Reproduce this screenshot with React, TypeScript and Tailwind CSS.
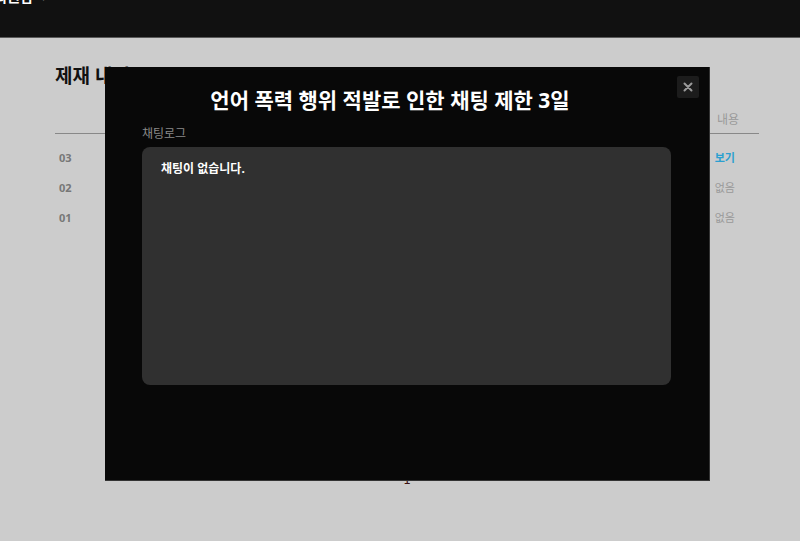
const font = { fontFamily: '"Noto Sans", "Noto Sans CJK KR", sans-serif' }

const rows = [
  { no: '03', content: '보기', link: true },
  { no: '02', content: '없음', link: false },
  { no: '01', content: '없음', link: false },
]

export default function App() {
  return (
    <div className="relative h-[541px] w-[800px] overflow-hidden bg-[#cccccc]" style={font}>
      {/* Top bar */}
      <div className="flex h-[38px] items-start border-b border-[#5a5a5a] bg-[#111111]">
        <div className="-ml-[6px] -mt-[10px] flex items-center gap-2 text-[14px] font-bold leading-[14px] text-white">
          <span>회원님</span>
          <span className="text-[10px] text-[#666]">▾</span>
        </div>
      </div>

      {/* Page content */}
      <div className="ml-[55px] mr-[41px] pt-[24px]">
        <h1 className="text-[19px] font-bold leading-[28px] text-[#111]">제재 내역</h1>
        <div className="mt-[16px] flex h-[28px] items-center justify-end border-b border-[#888] pr-[20px]">
          <span className="text-[12px] text-[#999]">내용</span>
        </div>
        <div className="pt-[9px]">
          {rows.map((r) => (
            <div key={r.no} className="flex h-[30px] items-center justify-between pl-[4px] pr-[24px]">
              <span className="text-[11px] font-bold text-[#777]">{r.no}</span>
              <span className={r.link ? 'text-[11px] font-bold text-[#2a9fd0]' : 'text-[11px] text-[#999]'}>
                {r.content}
              </span>
            </div>
          ))}
        </div>
        <div
          className="mt-[239px] text-center text-[12px] leading-[16px] text-[#3a1010]"
          style={{ fontFamily: '"DejaVu Sans", sans-serif' }}
        >
          1
        </div>
      </div>

      {/* Modal */}
      <div className="absolute left-[105px] top-[67px] flex h-[414px] w-[605px] flex-col border-b border-r border-[#333] bg-[#080808] px-[37px]">
        <button className="absolute right-[10px] top-[9px] flex h-[22px] w-[22px] items-center justify-center rounded-[2px] bg-[#1c1c1c]">
          <svg width="10" height="10" viewBox="0 0 10 10" fill="none">
            <path d="M1.5 1.5L8.5 8.5M8.5 1.5L1.5 8.5" stroke="#9a9a9a" strokeWidth="2" strokeLinecap="round" />
          </svg>
        </button>
        <h2 className="mt-[18px] pr-[34px] text-center text-[21px] font-bold leading-[30px] text-white">
          언어 폭력 행위 적발로 인한 채팅 제한 3일
        </h2>
        <div className="mt-[10px] text-[12px] leading-[18px] text-[#8a8a8a]">채팅로그</div>
        <div className="mt-[4px] h-[238px] w-[529px] rounded-[8px] bg-[#303030] px-[19px] py-[13px]">
          <p className="text-[12px] font-bold leading-[18px] text-white">채팅이 없습니다.</p>
        </div>
      </div>
    </div>
  )
}
